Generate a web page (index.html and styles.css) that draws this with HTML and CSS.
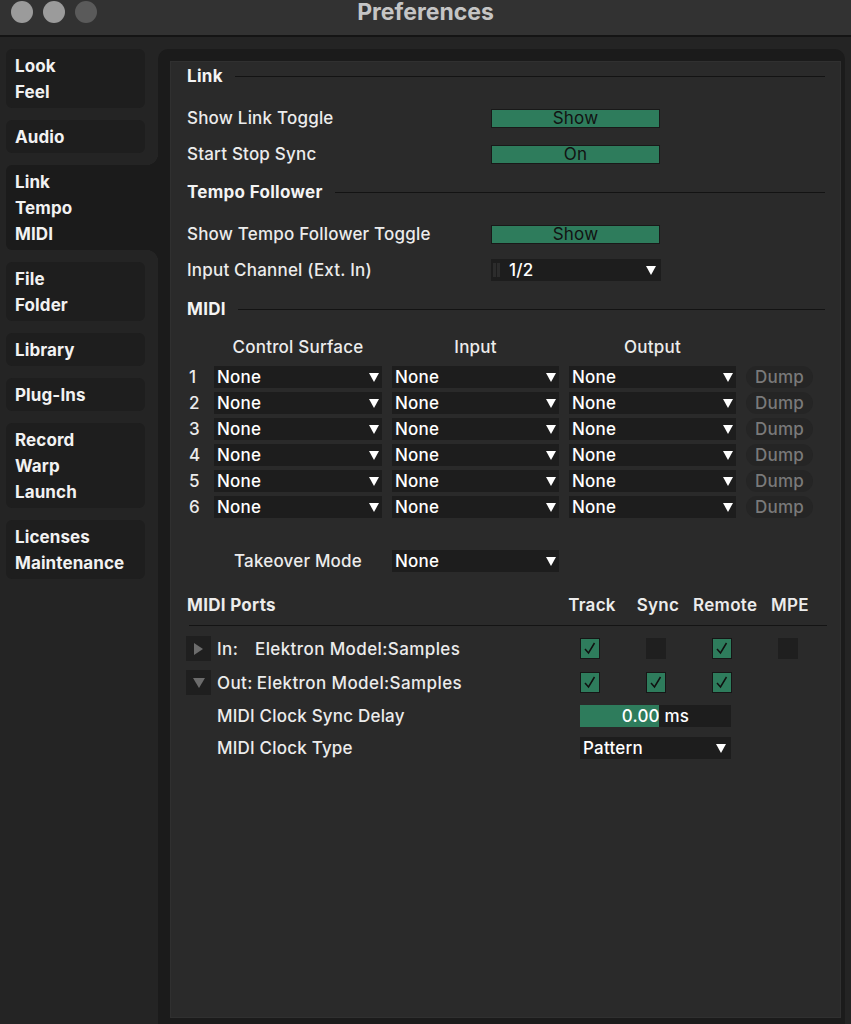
FILE: index.html
```html
<!DOCTYPE html>
<html lang="en">
<head>
    <meta charset="UTF-8">
    <meta name="viewport" content="width=device-width, initial-scale=1.0">
    <title>Preferences</title>
    <link rel="stylesheet" href="styles.css">
</head>
<body>
    <div class="titlebar">
        <div class="lights">
            <span class="light"></span>
            <span class="light"></span>
            <span class="light dim"></span>
        </div>
        <div class="title">Preferences</div>
        <div></div>
    </div>

    <div class="window">
        <nav class="sidebar">
            <div class="tab">Look<br>Feel</div>
            <div class="tab">Audio</div>
            <div class="tab active">Link<br>Tempo<br>MIDI</div>
            <div class="tab">File<br>Folder</div>
            <div class="tab">Library</div>
            <div class="tab">Plug-Ins</div>
            <div class="tab">Record<br>Warp<br>Launch</div>
            <div class="tab">Licenses<br>Maintenance</div>
        </nav>

        <main class="panel">
            <div class="page">
                <!-- Link -->
                <div class="section-head"><span>Link</span><span class="rule"></span></div>
                <div class="row gap-lg">
                    <span class="label">Show Link Toggle</span>
                    <div class="toggle">Show</div>
                </div>
                <div class="row gap-sm">
                    <span class="label">Start Stop Sync</span>
                    <div class="toggle">On</div>
                </div>

                <!-- Tempo Follower -->
                <div class="section-head gap-md"><span>Tempo Follower</span><span class="rule"></span></div>
                <div class="row gap-lg">
                    <span class="label">Show Tempo Follower Toggle</span>
                    <div class="toggle">Show</div>
                </div>
                <div class="row gap-sm">
                    <span class="label">Input Channel (Ext. In)</span>
                    <div class="dropdown channel"><span class="meter"></span>1/2</div>
                </div>

                <!-- MIDI -->
                <div class="section-head midi-title"><span>MIDI</span><span class="rule"></span></div>
                <div class="midi-cols midi-head">
                    <span></span>
                    <span>Control Surface</span>
                    <span>Input</span>
                    <span>Output</span>
                    <span></span>
                </div>
                <div class="midi-rows">
                    <div class="midi-cols midi-row"><span class="num">1</span><div class="dropdown">None</div><div class="dropdown">None</div><div class="dropdown">None</div><div class="dump">Dump</div></div>
                    <div class="midi-cols midi-row"><span class="num">2</span><div class="dropdown">None</div><div class="dropdown">None</div><div class="dropdown">None</div><div class="dump">Dump</div></div>
                    <div class="midi-cols midi-row"><span class="num">3</span><div class="dropdown">None</div><div class="dropdown">None</div><div class="dropdown">None</div><div class="dump">Dump</div></div>
                    <div class="midi-cols midi-row"><span class="num">4</span><div class="dropdown">None</div><div class="dropdown">None</div><div class="dropdown">None</div><div class="dump">Dump</div></div>
                    <div class="midi-cols midi-row"><span class="num">5</span><div class="dropdown">None</div><div class="dropdown">None</div><div class="dropdown">None</div><div class="dump">Dump</div></div>
                    <div class="midi-cols midi-row"><span class="num">6</span><div class="dropdown">None</div><div class="dropdown">None</div><div class="dropdown">None</div><div class="dump">Dump</div></div>
                </div>
                <div class="midi-cols midi-row takeover">
                    <span></span>
                    <span class="takeover-label">Takeover Mode</span>
                    <div class="dropdown">None</div>
                </div>

                <!-- MIDI Ports -->
                <div class="ports-cols ports-head">
                    <span>MIDI Ports</span>
                    <span>Track</span>
                    <span>Sync</span>
                    <span>Remote</span>
                    <span>MPE</span>
                </div>
                <div class="ports-rule"></div>

                <div class="ports-cols port-row first">
                    <div class="port-name">
                        <span class="disclose">
                            <svg width="9" height="12" viewBox="0 0 9 12"><polygon points="0,0 9,6 0,12" fill="#6c6c6c"/></svg>
                        </span>
                        <span class="port-dir">In:</span>Elektron Model:Samples
                    </div>
                    <div class="cell"><span class="check on"><svg width="18" height="19" viewBox="0 0 18 19"><polyline points="4,10 7.5,14 13.5,4" fill="none" stroke="#101010" stroke-width="1.5"/></svg></span></div>
                    <div class="cell"><span class="check"></span></div>
                    <div class="cell"><span class="check on"><svg width="18" height="19" viewBox="0 0 18 19"><polyline points="4,10 7.5,14 13.5,4" fill="none" stroke="#101010" stroke-width="1.5"/></svg></span></div>
                    <div class="cell"><span class="check"></span></div>
                </div>
                <div class="ports-cols port-row">
                    <div class="port-name">
                        <span class="disclose">
                            <svg width="12" height="10" viewBox="0 0 12 10"><polygon points="0,0 12,0 6,10" fill="#6c6c6c"/></svg>
                        </span>
                        <span class="port-dir">Out:</span>Elektron Model:Samples
                    </div>
                    <div class="cell"><span class="check on"><svg width="18" height="19" viewBox="0 0 18 19"><polyline points="4,10 7.5,14 13.5,4" fill="none" stroke="#101010" stroke-width="1.5"/></svg></span></div>
                    <div class="cell"><span class="check on"><svg width="18" height="19" viewBox="0 0 18 19"><polyline points="4,10 7.5,14 13.5,4" fill="none" stroke="#101010" stroke-width="1.5"/></svg></span></div>
                    <div class="cell"><span class="check on"><svg width="18" height="19" viewBox="0 0 18 19"><polyline points="4,10 7.5,14 13.5,4" fill="none" stroke="#101010" stroke-width="1.5"/></svg></span></div>
                    <div class="cell"></div>
                </div>

                <div class="clock-row">
                    <span class="sub-label">MIDI Clock Sync Delay</span>
                    <div class="slider" style="--fill: 52%">0.00 ms</div>
                </div>
                <div class="clock-row">
                    <span class="sub-label">MIDI Clock Type</span>
                    <div class="dropdown wide">Pattern</div>
                </div>
            </div>
        </main>
    </div>
</body>
</html>
```

FILE: styles.css
```css
body {
    margin: 0;
    width: 851px;
    height: 1024px;
    overflow: hidden;
    background: #242424;
    color: #ececec;
    font-family: Inter, "Noto Sans", sans-serif;
    font-size: 17px;
    letter-spacing: 0.2px;
}

/* title bar */
.titlebar {
    display: grid;
    grid-template-columns: 1fr auto 1fr;
    align-items: start;
    height: 35px;
    background: #323232;
    border-bottom: 2px solid #141414;
}
.lights {
    display: flex;
    gap: 10px;
    padding: 1px 0 0 11px;
}
.light {
    width: 22px;
    height: 22px;
    border-radius: 50%;
    background: #9b9b9b;
}
.light.dim {
    background: #5a5a5a;
}
.title {
    font-size: 23px;
    font-weight: 700;
    line-height: 24px;
    letter-spacing: 0;
    color: #c5c5c5;
}

/* window body */
.window {
    display: flex;
    height: 975px;
    padding-top: 12px;
}
.sidebar {
    width: 158px;
    flex-shrink: 0;
    display: flex;
    flex-direction: column;
    gap: 12px;
}
.tab {
    margin-left: 6px;
    width: 139px;
    box-sizing: border-box;
    padding: 4px 9px 3px;
    line-height: 26px;
    font-size: 17px;
    font-weight: 700;
    letter-spacing: 0.1px;
    color: #f2f2f2;
    background: #1e1e1e;
    border-radius: 6px;
}
.tab.active {
    width: 152px;
    border-radius: 6px 0 0 6px;
    background: #1b1b1b;
    position: relative;
}
.tab.active::before,
.tab.active::after {
    content: "";
    position: absolute;
    right: 0;
    width: 12px;
    height: 12px;
}
.tab.active::before {
    top: -12px;
    background: radial-gradient(circle at 0 0, #242424 12px, #1b1b1b 12.5px);
}
.tab.active::after {
    bottom: -12px;
    background: radial-gradient(circle at 0 100%, #242424 12px, #1b1b1b 12.5px);
}

.panel {
    flex: 1;
    display: flex;
    margin-right: 6px;
    padding: 12px 4px 6px 12px;
    background: #1b1b1b;
    border-radius: 10px 10px 0 0;
}
.page {
    flex: 1;
    background: #2a2a2a;
    border: 1px solid #303030;
    padding: 2px 15px 0 16px;
}

/* sections */
.section-head {
    display: flex;
    align-items: center;
    height: 24px;
    font-weight: 700;
    letter-spacing: 0.3px;
    color: #f4f4f4;
}
.rule {
    flex: 1;
    height: 1px;
    margin-left: 12px;
    background: #131313;
}
.gap-lg { margin-top: 18px; }
.gap-md { margin-top: 14px; }
.gap-sm { margin-top: 12px; }
.midi-title { margin-top: 15px; }

.row {
    display: flex;
    align-items: center;
    height: 24px;
}
.label {
    width: 304px;
    font-weight: 500;
}
.toggle {
    width: 169px;
    height: 19px;
    box-sizing: border-box;
    display: flex;
    align-items: center;
    justify-content: center;
    background: #2e7c5c;
    border: 1px solid #191919;
    color: #121212;
    font-weight: 400;
}

.dropdown {
    height: 22px;
    box-sizing: border-box;
    display: flex;
    align-items: center;
    padding: 0 3px;
    background: #1d1d1d;
    color: #fff;
    font-weight: 500;
}
.dropdown::after {
    content: "";
    margin-left: auto;
    border-left: 5px solid transparent;
    border-right: 5px solid transparent;
    border-top: 9px solid #fff;
}
.dropdown.channel {
    width: 170px;
    padding: 0 5px 0 2px;
}
.dropdown.wide {
    padding-right: 5px;
}
.meter {
    width: 7px;
    height: 14px;
    margin-right: 9px;
    background: repeating-linear-gradient(to right, #2c2c2c 0 3px, transparent 3px 4px);
}

/* midi table */
.midi-cols {
    display: grid;
    grid-template-columns: 17px 168px 167px 167px 67px;
    column-gap: 10px;
}
.midi-head {
    height: 24px;
    align-items: center;
    margin-top: 14px;
    text-align: center;
    font-weight: 500;
}
.midi-rows {
    padding-top: 3px;
}
.midi-row {
    height: 22px;
    margin-top: 4px;
    align-items: center;
}
.num {
    padding-left: 2px;
    font-weight: 500;
}
.dump {
    height: 22px;
    display: flex;
    align-items: center;
    justify-content: center;
    border-radius: 11px;
    background: #252525;
    color: #7a7a7a;
    font-weight: 500;
}
.takeover {
    margin-top: 32px;
}
.takeover-label {
    text-align: center;
    font-weight: 500;
}

/* midi ports */
.ports-cols {
    display: grid;
    grid-template-columns: 370px repeat(4, 66px);
    align-items: center;
}
.ports-head {
    height: 24px;
    margin-top: 21px;
    font-weight: 700;
    letter-spacing: 0.3px;
}
.ports-head span + span {
    text-align: center;
    padding-left: 4px;
    font-weight: 600;
}
.ports-rule {
    height: 1px;
    margin: 8px -2px 0 2px;
    background: #141414;
}
.port-row {
    height: 25px;
    margin-top: 9px;
}
.port-row.first {
    margin-top: 10px;
}
.port-name {
    display: flex;
    align-items: center;
    font-weight: 500;
    letter-spacing: 0.4px;
}
.disclose {
    width: 25px;
    height: 25px;
    margin: 0 6px 0 -1px;
    display: flex;
    align-items: center;
    justify-content: center;
    background: #1f1f1f;
}
.port-dir {
    min-width: 38px;
    padding-right: 4px;
    box-sizing: border-box;
}
.cell {
    display: flex;
    justify-content: center;
}
.check {
    width: 20px;
    height: 21px;
    box-sizing: border-box;
    display: flex;
    align-items: center;
    justify-content: center;
    background: #1f1f1f;
}
.check.on {
    background: #2e7c5c;
    border: 1px solid #161616;
}

.clock-row {
    display: grid;
    grid-template-columns: 393px 151px;
    align-items: center;
    height: 22px;
    margin-top: 10px;
}
.sub-label {
    padding-left: 30px;
    font-weight: 500;
}
.slider {
    height: 22px;
    display: flex;
    align-items: center;
    justify-content: center;
    background: linear-gradient(to right, #2e7c5c var(--fill), #1d1d1d var(--fill));
    color: #fff;
    font-weight: 500;
}
```
